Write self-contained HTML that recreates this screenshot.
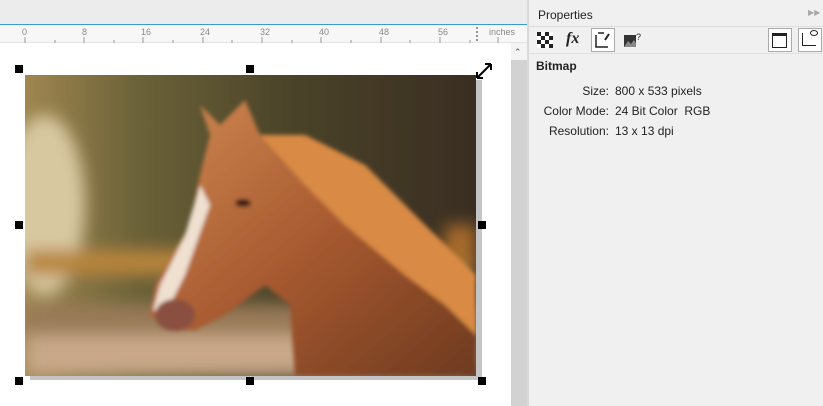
<!DOCTYPE html>
<html><head><style>
body{margin:0;width:823px;height:406px;overflow:hidden;background:#fff;font-family:"Liberation Sans",sans-serif;position:relative}
.a{position:absolute}
.h{position:absolute;width:8px;height:8px;background:#000}
.t{font-size:12px;color:#222}
</style></head><body>
<div class="a" style="left:0;top:0;width:528px;height:24px;background:#ececec"></div>
<div class="a" style="left:0;top:24px;width:528px;height:1px;background:#3a9ad6"></div>
<div class="a" style="left:0;top:25px;width:528px;height:17px;background:#f7f7f7;border-bottom:1px solid #e3e3e3"></div>
<svg class="a" style="left:0;top:25px" width="528" height="18">
<g fill="#888" font-size="9" font-family="Liberation Sans">
<text x="22" y="10">0</text><text x="82" y="10">8</text><text x="141" y="10">16</text><text x="200" y="10">24</text><text x="260" y="10">32</text><text x="319" y="10">40</text><text x="379" y="10">48</text><text x="438" y="10">56</text><text x="489" y="10">inches</text></g>
<g stroke="#999"><path d="M25 12v6M84 12v6M143 12v6M203 12v6M262 12v6M321 12v6M381 12v6M440 12v6M55 15v3M114 15v3M173 15v3M232 15v3M292 15v3M351 15v3M410 15v3M470 15v3M498 12v6"/>
<path d="M477 2v16" stroke="#333" stroke-dasharray="2 2"/></g></svg>
<div class="a" style="left:511px;top:43px;width:16px;height:363px;background:#f4f4f4"></div>
<div class="a" style="left:511px;top:60px;width:16px;height:346px;background:#d2d2d2"></div>
<div class="a" style="left:514px;top:47px;font-size:9px;color:#555">&#8963;</div>
<div class="a" style="left:527px;top:0;width:2px;height:406px;background:#dadada"></div>
<!-- image -->
<div class="a" style="left:30px;top:80px;width:452px;height:300px;background:#c4c4c4"></div>
<svg class="a" style="left:25px;top:75px" width="451" height="301" viewBox="0 0 451 301">
<defs>
<linearGradient id="bg" x1="0" y1="0" x2="1" y2="0"><stop offset="0" stop-color="#a08650"/><stop offset=".25" stop-color="#6b6238"/><stop offset=".6" stop-color="#4a4228"/><stop offset="1" stop-color="#3a2e22"/></linearGradient>
<linearGradient id="hr" x1="0" y1="0" x2="1" y2="1"><stop offset="0" stop-color="#d08a52"/><stop offset=".5" stop-color="#a85a30"/><stop offset="1" stop-color="#6e3a20"/></linearGradient>
<filter id="b"><feGaussianBlur stdDeviation="8"/></filter>
<filter id="b2"><feGaussianBlur stdDeviation="2"/></filter>
</defs>
<rect width="451" height="301" fill="url(#bg)"/>
<g filter="url(#b)">
<ellipse cx="20" cy="130" rx="40" ry="90" fill="#d8c8a0"/>
<rect x="0" y="175" width="451" height="25" fill="#b8843a"/>
<rect x="0" y="230" width="451" height="30" fill="#9a7a58"/>
<rect x="0" y="260" width="451" height="41" fill="#c8a888"/>
<rect x="420" y="150" width="31" height="40" fill="#a86a2a"/>
</g>
<g filter="url(#b2)">
<path d="M185 60 L175 30 L195 50 L220 25 L235 60 L270 70 L330 110 L390 160 L440 200 L451 240 L451 301 L270 301 L265 230 L240 210 L200 240 L170 255 L145 255 L125 240 L130 210 L165 150 L175 100 Z" fill="url(#hr)"/>
<path d="M235 60 L280 60 L340 90 L400 150 L451 200 L451 260 L420 230 L380 200 L320 150 L280 110 Z" fill="#d98a45"/>
<path d="M175 110 L160 160 L135 210 L128 235 L140 240 L160 200 L185 130 Z" fill="#efe0d0"/>
<ellipse cx="150" cy="240" rx="20" ry="16" fill="#8a5040"/>
<ellipse cx="218" cy="128" rx="8" ry="4" fill="#3a1e12"/>
</g>
</svg>
<div class="h" style="left:15px;top:65px"></div><div class="h" style="left:246px;top:65px"></div>
<div class="h" style="left:15px;top:221px"></div><div class="h" style="left:478px;top:221px"></div>
<div class="h" style="left:15px;top:377px"></div><div class="h" style="left:246px;top:377px"></div><div class="h" style="left:478px;top:377px"></div>
<svg class="a" style="left:474px;top:61px" width="20" height="20"><path d="M3 17L17 3M3 17v-6M3 17h6M17 3h-6M17 3v6" stroke="#000" stroke-width="2" fill="none"/></svg>
<!-- panel -->
<div class="a" style="left:529px;top:0;width:294px;height:406px;background:#f0f0f0"></div>
<div class="a" style="left:529px;top:26px;width:294px;height:1px;background:#ddd"></div>
<div class="a t" style="left:538px;top:8px">Properties</div>
<div class="a" style="left:808px;top:8px;font-size:8px;color:#aaa">&#9654;&#9654;</div>
<svg class="a" style="left:537px;top:32px" width="16" height="16"><rect width="16" height="16" fill="#fff"/><g fill="#222"><rect x="0" y="0" width="4" height="4"/><rect x="8" y="0" width="4" height="4"/><rect x="4" y="4" width="4" height="4"/><rect x="12" y="4" width="4" height="4"/><rect x="0" y="8" width="4" height="4"/><rect x="8" y="8" width="4" height="4"/><rect x="4" y="12" width="4" height="4"/><rect x="12" y="12" width="4" height="4"/></g></svg>
<div class="a" style="left:566px;top:30px;font:italic bold 16px 'Liberation Serif',serif;color:#222">fx</div>
<div class="a" style="left:591px;top:28px;width:22px;height:22px;background:#fff;border:1px solid #aaa"></div>
<svg class="a" style="left:595px;top:32px" width="16" height="16"><path d="M1 3v12h12M3 1h6" stroke="#222" fill="none" stroke-width="1.5"/><path d="M10 8l4-6" stroke="#222" stroke-width="2"/></svg>
<svg class="a" style="left:624px;top:32px" width="18" height="16"><path d="M0 3h12v12H0z" fill="#333"/><path d="M0 15l4-6 3 3 3-4 2 3v4z" fill="#888"/><text x="12" y="8" font-size="9" fill="#222">?</text></svg>
<div class="a" style="left:768px;top:28px;width:22px;height:22px;background:#fff;border:1px solid #aaa"></div>
<div class="a" style="left:772px;top:33px;width:13px;height:11px;border:1.5px solid #222;border-top-width:3px"></div>
<div class="a" style="left:798px;top:28px;width:22px;height:22px;background:#fff;border:1px solid #aaa"></div>
<div class="a" style="left:802px;top:33px;width:13px;height:12px;border-left:1.5px solid #222;border-bottom:1.5px solid #222"></div>
<div class="a" style="left:810px;top:30px;width:6px;height:4px;border:1px solid #222;border-radius:50%"></div>
<div class="a" style="left:529px;top:53px;width:294px;height:1px;background:#e0e0e0"></div>
<div class="a t" style="left:536px;top:59px;font-weight:bold">Bitmap</div>
<div class="a t" style="left:529px;top:84px;width:80px;text-align:right">Size:</div>
<div class="a t" style="left:615px;top:84px">800 x 533 pixels</div>
<div class="a t" style="left:529px;top:104px;width:80px;text-align:right">Color Mode:</div>
<div class="a t" style="left:615px;top:104px">24 Bit Color&nbsp; RGB</div>
<div class="a t" style="left:529px;top:124px;width:80px;text-align:right">Resolution:</div>
<div class="a t" style="left:615px;top:124px">13 x 13 dpi</div>
</body></html>
